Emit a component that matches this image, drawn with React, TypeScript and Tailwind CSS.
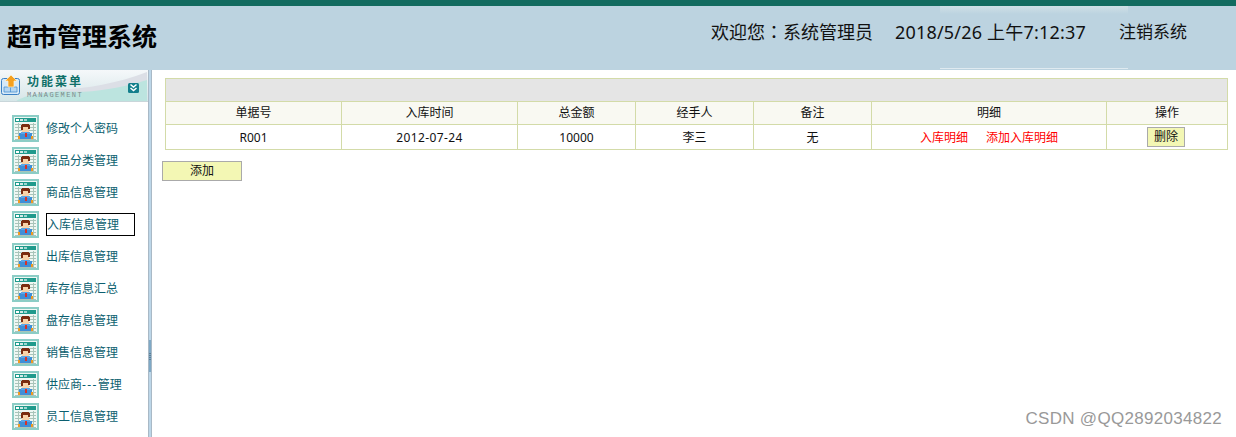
const menus = [
  "修改个人密码",
  "商品分类管理",
  "商品信息管理",
  "入库信息管理",
  "出库信息管理",
  "库存信息汇总",
  "盘存信息管理",
  "销售信息管理",
  "供应商---管理",
  "员工信息管理",
];

const columns = [
  { name: "单据号", width: "w-[176px]" },
  { name: "入库时间", width: "w-[176px]" },
  { name: "总金额", width: "w-[118px]" },
  { name: "经手人", width: "w-[118px]" },
  { name: "备注", width: "w-[118px]" },
  { name: "明细", width: "w-[235px]" },
  { name: "操作", width: "w-[121px]" },
];

function MenuIcon() {
  return (
    <svg width="27" height="27" viewBox="0 0 27 27" shapeRendering="crispEdges" className="shrink-0">
      <rect width="27" height="27" fill="#8ccdc6" />
      <rect x="2" y="2" width="23" height="23" fill="#eef7f3" />
      <rect x="3" y="3" width="21" height="4" fill="#1f9a8c" />
      <rect x="4" y="4" width="3" height="2" fill="#fff" />
      <rect x="8" y="4" width="3" height="2" fill="#cfeae6" />
      <rect x="12" y="4" width="3" height="2" fill="#9fd6cf" />
      <path d="M3 9h21M3 12h21M3 15h21M3 18h21M3 21h21M3 24h21" stroke="#a9c4ba" fill="none" />
      <path d="M6 8v17M21 8v17" stroke="#a9c4ba" fill="none" />
      <rect x="7" y="18" width="13" height="6" fill="#3f8fd8" />
      <rect x="9" y="17" width="9" height="2" fill="#5aa6ea" />
      <rect x="6" y="21" width="2" height="3" fill="#f09a20" />
      <rect x="19" y="21" width="2" height="3" fill="#f09a20" />
      <rect x="10" y="11" width="7" height="6" fill="#f8d2a8" />
      <rect x="10" y="9" width="7" height="3" fill="#7a2c10" />
      <rect x="9" y="10" width="2" height="5" fill="#7a2c10" />
      <rect x="16" y="10" width="2" height="4" fill="#7a2c10" />
      <rect x="13" y="18" width="2" height="4" fill="#d8322a" />
    </svg>
  );
}

function MenuHeader() {
  return (
    <div className="relative h-[32px] bg-gradient-to-b from-[#f5f8fa] to-[#d6e6e8] border-b border-[#c9d6da] overflow-hidden flex">
      <svg width="147" height="32" viewBox="0 0 147 32" className="absolute left-0 top-0">
        <path d="M15 32C35 18 70 26 147 6V32Z" fill="#bce4df" />
        <path d="M40 18C70 22 110 16 147 2V10C100 24 70 24 40 18Z" fill="#dcdfe6" />
      </svg>
      <svg width="21" height="22" viewBox="0 0 21 22" className="relative mt-[5px] ml-px shrink-0">
        <rect x="0.5" y="3.5" width="18" height="16" rx="2" fill="#d6e9f8" stroke="#3b7fc4" />
        <path d="M3 12h13v5H3z" fill="#b5d6f2" stroke="#4f92d0" strokeWidth="0.8" />
        <path d="M9.5 12v5" stroke="#4f92d0" strokeWidth="0.8" />
        <path d="M10 0l6 6h-3v6H7V6H4z" fill="#f5a020" stroke="#fff3d8" strokeWidth="0.7" />
      </svg>
      <div className="relative ml-[5px] flex flex-col">
        <span className="mt-[5px] text-[12px] leading-[14px] font-bold tracking-[2px] text-[#0f6f68]">功能菜单</span>
        <span className="mt-[2px] text-[7px] leading-[8px] tracking-[1.4px] text-[#7d8a8c] font-['Liberation_Mono',monospace]">MANAGEMENT</span>
      </div>
      <svg width="11" height="10" viewBox="0 0 11 10" className="absolute left-[128px] top-[13px]">
        <rect width="11" height="10" rx="1.5" fill="#137f8c" />
        <path d="M2.5 1.5l3 2.5 3-2.5M2.5 5l3 2.5 3-2.5" stroke="#fff" strokeWidth="1.5" fill="none" />
      </svg>
    </div>
  );
}

function Sidebar() {
  return (
    <aside className="w-[148px] shrink-0">
      <MenuHeader />
      <ul className="pt-[13px] flex flex-col gap-[5px]">
        {menus.map((m, i) => (
          <li key={m} className="flex items-center h-[27px] pl-[12px]">
            <MenuIcon />
            {i === 3 ? (
              <span className="ml-[7px] w-[89px] h-[23px] leading-[22px] border border-black text-[12px] text-[#0c5f70] whitespace-nowrap">
                {m}
              </span>
            ) : i === 8 ? (
              <span className="ml-[7px] w-[89px] text-[12px] text-[#0c5f70] whitespace-nowrap">
                供应商<span className="tracking-[1.4px]">---</span>管理
              </span>
            ) : (
              <span className="ml-[7px] w-[89px] text-[12px] text-[#0c5f70] whitespace-nowrap">{m}</span>
            )}
          </li>
        ))}
      </ul>
    </aside>
  );
}

function Splitter() {
  return (
    <div className="w-[4px] shrink-0 border-x border-[#a9b9c6] bg-[#bcd6e8] flex flex-col pt-[270px]">
      <div className="h-[32px] bg-[#7fa9c6] flex flex-col justify-center gap-px">
        <div className="h-px bg-[#5f7f94]" />
        <div className="h-px bg-[#5f7f94]" />
        <div className="h-px bg-[#5f7f94]" />
        <div className="h-px bg-[#5f7f94]" />
      </div>
    </div>
  );
}

function StockTable() {
  const cell = "border border-[#d3dba8] text-center text-[12px] p-0";
  const bodyCell = `${cell} pt-[2px]`;
  return (
    <table className="w-[1062px] table-fixed border-collapse ml-[13px]">
      <colgroup>
        {columns.map((c) => (
          <col key={c.name} className={c.width} />
        ))}
      </colgroup>
      <thead>
        <tr>
          <th colSpan={7} className="h-[23px] bg-[#e5e5e5] border border-[#d3dba8]" />
        </tr>
        <tr className="bg-[#f9f9f2]">
          {columns.map((c) => (
            <th key={c.name} className={`${cell} h-[23px] font-normal text-[#111]`}>
              {c.name}
            </th>
          ))}
        </tr>
      </thead>
      <tbody>
        <tr className="text-[#111]">
          <td className={`${bodyCell} h-[25px]`}>R001</td>
          <td className={`${bodyCell} tracking-[0.4px]`}>2012-07-24</td>
          <td className={bodyCell}>10000</td>
          <td className={bodyCell}>李三</td>
          <td className={bodyCell}>无</td>
          <td className={`${bodyCell} text-[#ff0000]`}>
            <span className="mr-[18px]">入库明细</span>
            <span>添加入库明细</span>
          </td>
          <td className={cell}>
            <button className="mr-[2px] w-[38px] h-[20px] bg-[#f3f7b4] border border-[#aaaaaa] text-[12px] leading-[18px] align-middle">
              删除
            </button>
          </td>
        </tr>
      </tbody>
    </table>
  );
}

export default function App() {
  return (
    <div className="relative w-[1236px] h-[437px] overflow-hidden bg-white flex flex-col font-['Noto_Sans','Noto_Sans_CJK_SC',sans-serif]">
      <header className="relative h-[70px] shrink-0 bg-[#bcd3e0] flex flex-col">
        <div className="h-[6px] bg-[#136b60]" />
        <div className="flex-1 flex items-center pb-[2px]">
          <h1 className="ml-[7px] text-[25px] font-bold text-black">超市管理系统</h1>
          <div className="ml-auto mr-[49px] mb-[10px] flex items-center text-[18px] text-[#111] whitespace-nowrap">
            <span>
              欢迎您<span className="font-['Noto_Sans_CJK_TC',sans-serif]">：</span>系统管理员
            </span>
            <span className="ml-[22px] tracking-[0.2px]">2018/5/26 上午7:12:37</span>
            <span className="ml-[33px] text-[17px]">注销系统</span>
          </div>
        </div>
        <div className="absolute left-[940px] top-[6px] w-[188px] h-[8px] bg-gradient-to-b from-[#d0dfe6] to-[#bcd3e0]" />
        <div className="absolute left-[940px] bottom-[1px] w-[188px] h-px bg-[#dfeaf0]" />
      </header>
      <div className="flex flex-1 min-h-0">
        <Sidebar />
        <Splitter />
        <main className="flex-1 pt-[8px]">
          <StockTable />
          <button className="mt-[11px] ml-[10px] block w-[80px] h-[20px] bg-[#f3f7b4] border border-[#aaaaaa] text-[12px] text-[#111]">
            添加
          </button>
        </main>
      </div>
      <div className="absolute right-[14px] bottom-[8px] text-[17px] leading-[20px] tracking-[0.3px] text-[#999999] font-['Liberation_Sans',sans-serif]">
        CSDN @QQ2892034822
      </div>
    </div>
  );
}
